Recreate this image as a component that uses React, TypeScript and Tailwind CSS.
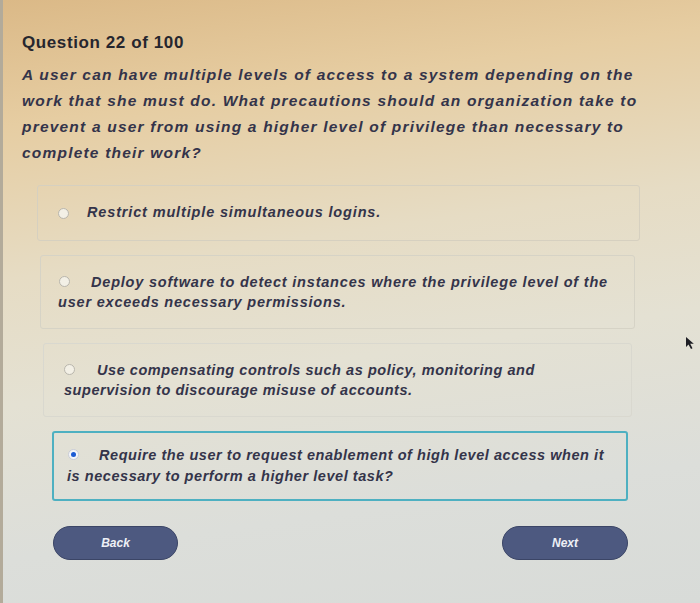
import React from 'react';

const font = { fontFamily: '"Liberation Sans", Arial, sans-serif' };

const Radio: React.FC<{ checked?: boolean; className?: string }> = ({ checked, className = '' }) => (
  <span
    className={`inline-block align-middle rounded-full h-[11px] w-[11px] border ${
      checked ? 'border-[#c9ccd6] bg-[#f4f5f8] p-[2px]' : 'border-[#b9b6ad] bg-[#f3f0e6]'
    } ${className}`}
  >
    {checked && <span className="block h-full w-full rounded-full bg-[#1c5bd4]" />}
  </span>
);

const App: React.FC = () => {
  return (
    <div
      style={font}
      className="relative h-[603px] w-full overflow-hidden border-l-[3px] border-[#b3ab9a] bg-[linear-gradient(172deg,#dbb987_0%,#e6cda2_18%,#e6dcc4_40%,#e4e1d3_58%,#dcdeda_80%,#d8dbd8_100%)] text-[#34344a]"
    >
      <h1 className="ml-[19px] pt-[32px] text-[17px] font-bold leading-[22px] tracking-[0.6px] text-[#26262e]">
        Question 22 of 100
      </h1>

      <p className="ml-[19px] mt-[8px] w-[640px] text-[15.5px] font-bold italic leading-[26px] tracking-[1.2px]">
        A user can have multiple levels of access to a system depending on the work that she must do.
        What precautions should an organization take to prevent a user from using a higher level of
        privilege than necessary to complete their work?
      </p>

      <div className="ml-[34px] mt-[19px] flex h-[56px] w-[603px] items-center rounded-[3px] border border-[#d6d0c0] pl-[20px] tracking-[0.85px]">
        <Radio />
        <span className="ml-[18px] text-[14.5px] font-bold italic">Restrict multiple simultaneous logins.</span>
      </div>

      <div className="ml-[37px] mt-[14px] w-[595px] rounded-[3px] border border-[#d6d3c6] py-[16px] pl-[17px] pr-[18px] text-[14.5px] font-bold italic leading-[20px] tracking-[0.8px]">
        <Radio className="ml-[1px] mr-[21px] -mt-[3px]" />
        Deploy software to detect instances where the privilege level of the user exceeds necessary
        permissions.
      </div>

      <div className="ml-[40px] mt-[14px] w-[589px] rounded-[3px] border border-[#d9d8cf] py-[16px] pl-[20px] pr-[20px] text-[14.5px] font-bold italic leading-[20px] tracking-[0.55px]">
        <Radio className="mr-[22px] -mt-[3px]" />
        Use compensating controls such as policy, monitoring and supervision to discourage misuse of
        accounts.
      </div>

      <div className="ml-[49px] mt-[14px] w-[576px] rounded-[3px] border-2 border-[#4eb0c1] py-[12px] pl-[13px] pr-[8px] text-[14.5px] font-bold italic leading-[21px] tracking-[0.55px]">
        <Radio checked className="ml-[1px] mr-[20px] -mt-[3px]" />
        Require the user to request enablement of high level access when it is necessary to perform a
        higher level task?
      </div>

      <div className="ml-[50px] mt-[25px] flex w-[575px] justify-between">
        <button className="h-[34px] w-[125px] rounded-full border border-[#3b4566] bg-[#4d5980] text-[12px] font-bold italic text-[#eef0f6]">
          Back
        </button>
        <button className="h-[34px] w-[126px] rounded-full border border-[#3b4566] bg-[#4d5980] text-[12px] font-bold italic text-[#eef0f6]">
          Next
        </button>
      </div>

      <svg className="absolute left-[682px] top-[336px]" width="10" height="14" viewBox="0 0 10 14">
        <path d="M1 1 L1 11 L3.5 8.5 L6 13 L7.5 12.3 L5.2 7.8 L8.8 7.8 Z" fill="#1e1e24" />
      </svg>
    </div>
  );
};

export default App;
